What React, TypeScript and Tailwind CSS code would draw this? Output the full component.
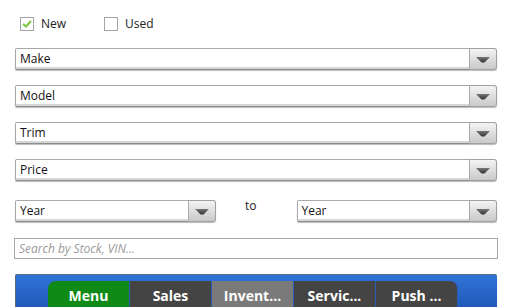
import React from 'react';

const font = { fontFamily: '"Open Sans", "Noto Sans", sans-serif' };

function Arrow() {
  return (
    <svg width="14" height="6" viewBox="0 0 14 6">
      <defs>
        <linearGradient id="ag" x1="0" y1="0" x2="0" y2="1">
          <stop offset="0" stopColor="#777" />
          <stop offset="1" stopColor="#333" />
        </linearGradient>
      </defs>
      <path d="M0 0 H14 L8.5 5.5 H5.5 Z" fill="url(#ag)" />
    </svg>
  );
}

function Select({ label, className }: { label: string; className?: string }) {
  return (
    <div className={`flex h-[22px] ${className ?? ''}`}>
      <div className="flex flex-1 items-center rounded-l-[2px] border border-[#a9a9a9] border-b-[#8c8c8c] bg-white pl-[4px] text-[12px] text-[#111] shadow-[inset_0_-2px_0_#d6d6d6,0_1px_1px_#bbb]">
        {label}
      </div>
      <div className="flex w-[27px] items-center justify-center rounded-r-[3px] border border-l-0 border-[#a0a0a0] bg-gradient-to-b from-[#f4f4f4] to-[#c9c9c9] pt-[2px] shadow-[0_1px_1px_#bbb]">
        <Arrow />
      </div>
    </div>
  );
}

function Check({ checked, label }: { checked?: boolean; label: string }) {
  return (
    <div className="flex items-center gap-[7px]">
      <div className="flex h-[14px] w-[14px] items-center justify-center border border-[#a3a3a3] bg-white">
        {checked && (
          <svg width="10" height="8" viewBox="0 0 10 8">
            <path d="M1 4 L4 6.5 L9 1" stroke="#7cc63a" strokeWidth="2" fill="none" />
          </svg>
        )}
      </div>
      <span className="text-[12px] text-[#222]">{label}</span>
    </div>
  );
}

const tabs = [
  { label: 'Menu', cls: 'bg-[#0f8a16] rounded-tl-[8px]' },
  { label: 'Sales', cls: 'bg-[#444]' },
  { label: 'Invent...', cls: 'bg-[#7a7a7a]' },
  { label: 'Servic...', cls: 'bg-[#444]' },
  { label: 'Push ...', cls: 'bg-[#444] rounded-tr-[8px]' },
];

export default function App() {
  return (
    <div className="h-[307px] w-[512px] overflow-hidden bg-white" style={font}>
      <div className="flex gap-[38px] pl-[20px] pt-[15px]">
        <Check checked label="New" />
        <Check label="Used" />
      </div>
      <div className="flex flex-col gap-[15px] pl-[15px] pr-[15px] pt-[15px]">
        <Select label="Make" />
        <Select label="Model" />
        <Select label="Trim" />
        <Select label="Price" />
        <div className="mt-[4px] flex items-start">
          <Select label="Year" className="w-[201px]" />
          <span className="ml-[29px] mr-[40px] -mt-[3px] text-[12px] text-[#222]">to</span>
          <Select label="Year" className="flex-1" />
        </div>
      </div>
      <div className="mx-[14px] mt-[16px] flex h-[21px] items-center border border-[#a8a8a8] bg-white pl-[4px] text-[12px] italic text-[#9a9a9a]">
        Search by Stock, VIN...
      </div>
      <div className="mx-[15px] mt-[15px] flex h-[40px] rounded-t-[2px] border-l border-t border-[#5a6a80] bg-gradient-to-b from-[#2f73d8] to-[#1d55b3] pl-[32px] pt-[6px]">
        {tabs.map((t) => (
          <div
            key={t.label}
            className={`flex w-[82px] justify-center border-r border-[#2a5fb8] pt-[4px] text-[14px] font-bold text-white ${t.cls}`}
          >
            {t.label}
          </div>
        ))}
      </div>
    </div>
  );
}
